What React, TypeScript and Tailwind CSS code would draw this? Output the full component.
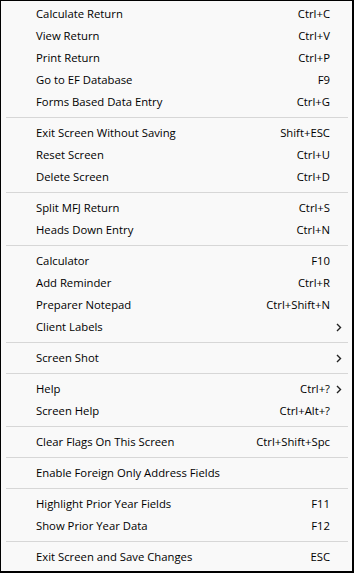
type Item = { label: string; shortcut?: string; submenu?: boolean };

const GROUPS: Item[][] = [
  [
    { label: "Calculate Return", shortcut: "Ctrl+C" },
    { label: "View Return", shortcut: "Ctrl+V" },
    { label: "Print Return", shortcut: "Ctrl+P" },
    { label: "Go to EF Database", shortcut: "F9" },
    { label: "Forms Based Data Entry", shortcut: "Ctrl+G" },
  ],
  [
    { label: "Exit Screen Without Saving", shortcut: "Shift+ESC" },
    { label: "Reset Screen", shortcut: "Ctrl+U" },
    { label: "Delete Screen", shortcut: "Ctrl+D" },
  ],
  [
    { label: "Split MFJ Return", shortcut: "Ctrl+S" },
    { label: "Heads Down Entry", shortcut: "Ctrl+N" },
  ],
  [
    { label: "Calculator", shortcut: "F10" },
    { label: "Add Reminder", shortcut: "Ctrl+R" },
    { label: "Preparer Notepad", shortcut: "Ctrl+Shift+N" },
    { label: "Client Labels", submenu: true },
  ],
  [{ label: "Screen Shot", submenu: true }],
  [
    { label: "Help", shortcut: "Ctrl+?", submenu: true },
    { label: "Screen Help", shortcut: "Ctrl+Alt+?" },
  ],
  [{ label: "Clear Flags On This Screen", shortcut: "Ctrl+Shift+Spc" }],
  [{ label: "Enable Foreign Only Address Fields" }],
  [
    { label: "Highlight Prior Year Fields", shortcut: "F11" },
    { label: "Show Prior Year Data", shortcut: "F12" },
  ],
  [{ label: "Exit Screen and Save Changes", shortcut: "ESC" }],
];

function Chevron() {
  return (
    <svg width="6" height="9" viewBox="0 0 6 9" className="text-[#222]">
      <path d="M1 1l3.5 3.5L1 8" fill="none" stroke="currentColor" strokeWidth="1.4" />
    </svg>
  );
}

function MenuRow({ item }: { item: Item }) {
  return (
    <div className="flex h-[22px] items-center pl-[35px] text-black">
      <span className="flex-1 whitespace-nowrap">{item.label}</span>
      {item.shortcut && <span className="whitespace-nowrap">{item.shortcut}</span>}
      <span className="flex w-[22px] items-center pl-[6px]">{item.submenu && <Chevron />}</span>
    </div>
  );
}

export default function App() {
  return (
    <div
      className="w-[354px] h-[573px] border-t border-l border-r-2 border-b-2 border-black bg-[#f9f9f9] pt-[2px] pb-[3px] text-[11.3px] leading-none"
      style={{ fontFamily: '"Segoe UI", "Open Sans", "Noto Sans", sans-serif' }}
    >
      {GROUPS.map((group, gi) => (
        <div key={gi}>
          {gi > 0 && (
            <div className="py-[4px] pl-[5px] pr-[4px]">
              <div className="h-px bg-[#d7d7d7]" />
            </div>
          )}
          {group.map((item) => (
            <MenuRow key={item.label} item={item} />
          ))}
        </div>
      ))}
    </div>
  );
}
